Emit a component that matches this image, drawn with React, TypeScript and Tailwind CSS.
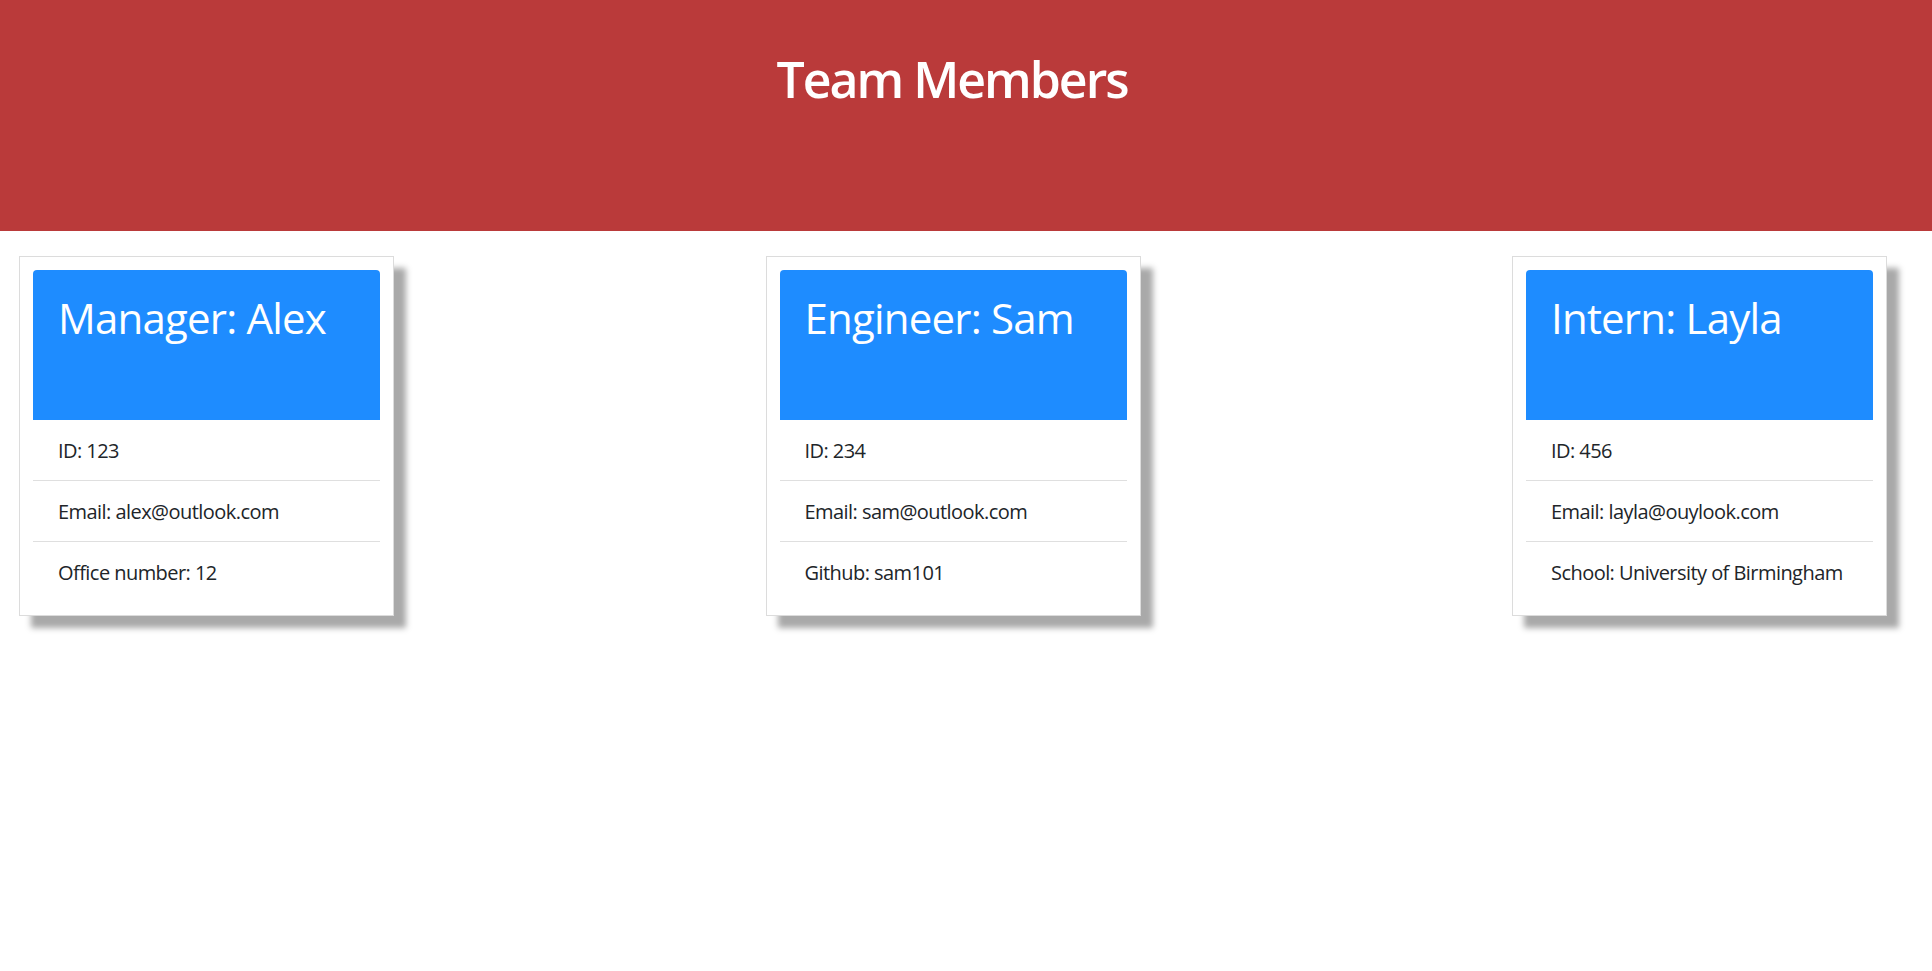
const members = [
  { title: "Manager: Alex", rows: ["ID: 123", "Email: alex@outlook.com", "Office number: 12"] },
  { title: "Engineer: Sam", rows: ["ID: 234", "Email: sam@outlook.com", "Github: sam101"] },
  { title: "Intern: Layla", rows: ["ID: 456", "Email: layla@ouylook.com", "School: University of Birmingham"] },
];

function MemberCard({ title, rows }: { title: string; rows: string[] }) {
  return (
    <div className="w-[375px] border border-[#dcdcdc] bg-white p-[13px] shadow-[12px_12px_6px_#a9a9a9]">
      <div className="h-[150px] rounded-t-[4px] bg-[#1e8cff] px-[25px] pt-[23px]">
        <h2 className="text-[42px] leading-[1.2] font-normal tracking-[-0.8px] whitespace-nowrap text-white">{title}</h2>
      </div>
      <ul>
        {rows.map((r, i) => (
          <li
            key={r}
            className={`px-[25px] pt-[16px] pb-[14px] text-[20px] leading-[30px] tracking-[-0.55px] whitespace-nowrap text-[#212529] ${
              i < rows.length - 1 ? "border-b border-[#dfdfdf]" : ""
            }`}
          >
            {r}
          </li>
        ))}
      </ul>
    </div>
  );
}

export default function App() {
  return (
    <div className="min-h-screen bg-white font-['Open_Sans',sans-serif]">
      <header className="h-[231px] bg-[#ba3a3a] pt-[49px] pr-[28px] text-center">
        <h1 className="text-[50px] leading-[1.2] font-semibold tracking-[-2px] text-white">Team Members</h1>
      </header>
      <main className="flex justify-between pt-[25px] pl-[19px] pr-[45px]">
        {members.map((m) => (
          <MemberCard key={m.title} title={m.title} rows={m.rows} />
        ))}
      </main>
    </div>
  );
}
